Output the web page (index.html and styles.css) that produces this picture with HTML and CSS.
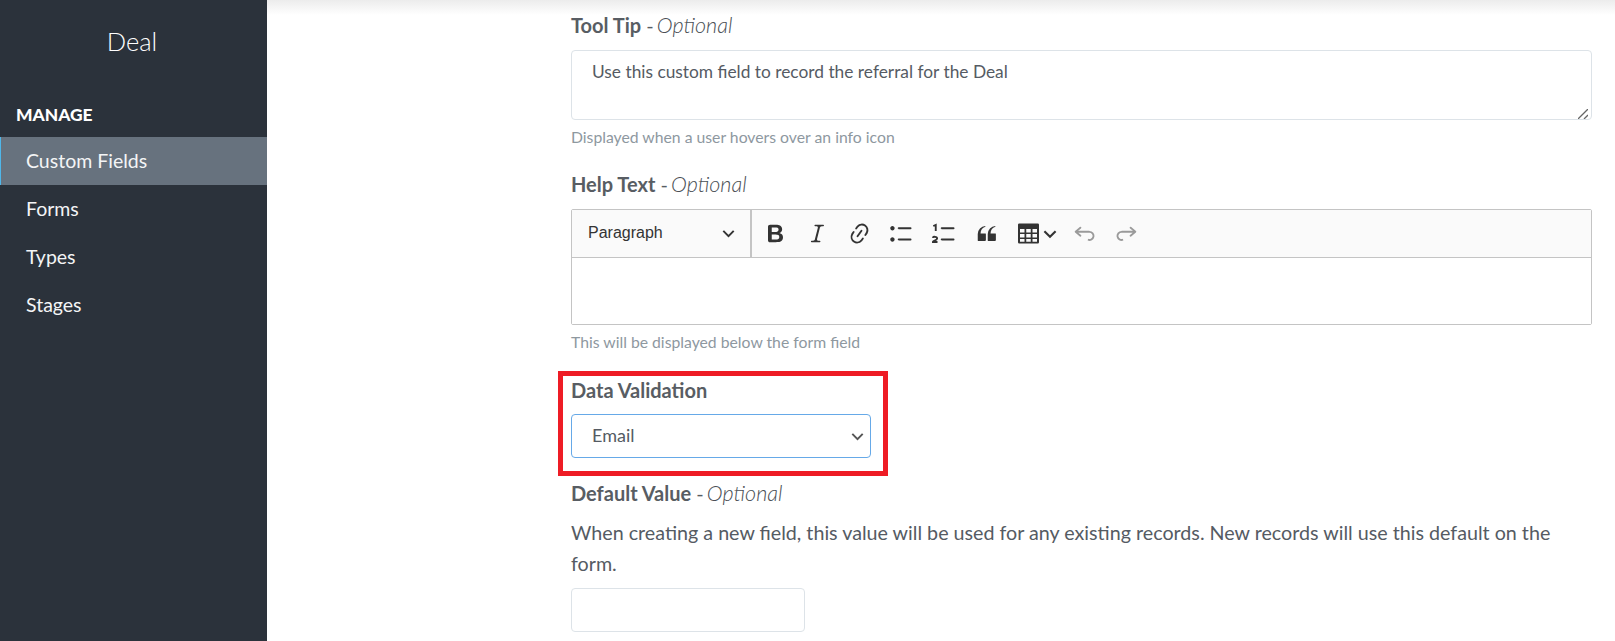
FILE: index.html
```html
<!DOCTYPE html>
<html lang="en">
<head>
<meta charset="utf-8">
<title>Custom Fields</title>
<link rel="stylesheet" href="styles.css">
</head>
<body>
<aside class="sidebar">
  <h1 class="sidebar-title">Deal</h1>
  <h2 class="sidebar-heading">MANAGE</h2>
  <nav class="sidebar-nav">
    <a class="nav-item active">Custom Fields</a>
    <a class="nav-item">Forms</a>
    <a class="nav-item">Types</a>
    <a class="nav-item">Stages</a>
  </nav>
</aside>
<main class="main">
  <div class="top-shadow"></div>
  <form class="form">
    <div class="field field-tooltip">
      <label class="label"><b>Tool Tip</b> - <i>Optional</i></label>
      <div class="textarea-wrap">
        <textarea class="control textarea">Use this custom field to record the referral for the Deal</textarea>
        <svg class="grip" viewBox="0 0 10 10"><path d="M0 10 10 0M6 10l4-4"/></svg>
      </div>
      <p class="hint">Displayed when a user hovers over an info icon</p>
    </div>
    <div class="field field-help">
      <label class="label"><b>Help Text</b> - <i>Optional</i></label>
      <div class="editor">
        <div class="toolbar">
          <div class="format">
            <span>Paragraph</span>
            <svg class="chev" viewBox="0 0 10 10"><path d="M1 3l4 4 4-4" /></svg>
          </div>
          <div class="tools">
            <svg class="icon" viewBox="0 0 20 20"><path d="M10.187 17H5.773c-.637 0-1.092-.138-1.364-.415-.273-.277-.409-.718-.409-1.323V4.738c0-.617.14-1.062.419-1.332.279-.27.73-.406 1.354-.406h4.68c.69 0 1.288.041 1.793.124.506.083.96.242 1.36.478.341.197.644.447.906.75a3.262 3.262 0 0 1 .808 2.162c0 1.401-.722 2.426-2.167 3.075C15.05 10.175 16 11.315 16 13.01a3.756 3.756 0 0 1-2.296 3.504 6.1 6.1 0 0 1-1.517.377c-.571.073-1.238.11-2 .11zm-.217-6.217H7v4.087h3.069c1.977 0 2.965-.69 2.965-2.072 0-.707-.256-1.22-.768-1.537-.512-.319-1.277-.478-2.296-.478zM7 5.13v3.619h2.606c.729 0 1.292-.067 1.69-.2a1.6 1.6 0 0 0 .91-.765c.165-.267.247-.566.247-.897 0-.707-.26-1.176-.778-1.409-.519-.232-1.31-.348-2.375-.348H7z"/></svg>
            <svg class="icon" viewBox="0 0 20 20"><path d="m9.586 14.633.021.004c-.036.335.095.655.393.962.082.083.173.15.274.201h1.474a.6.6 0 1 1 0 1.2H5.304a.6.6 0 0 1 0-1.2h1.15c.474-.07.809-.182 1.005-.334.157-.122.291-.32.404-.597l2.416-9.55a1.053 1.053 0 0 0-.281-.823 1.12 1.12 0 0 0-.442-.296H8.15a.6.6 0 0 1 0-1.2h6.443a.6.6 0 1 1 0 1.2h-1.195c-.376.056-.65.155-.823.296-.215.175-.423.439-.623.79l-2.366 9.347z"/></svg>
            <svg class="icon" viewBox="0 0 20 20"><path d="m11.077 15 .991-1.416a.75.75 0 1 1 1.229.86l-1.148 1.64a.748.748 0 0 1-.217.206 5.251 5.251 0 0 1-8.503-5.955.741.741 0 0 1 .12-.274l1.147-1.639a.75.75 0 1 1 1.228.86L4.933 10.7l.006.003a3.75 3.75 0 0 0 6.132 4.294l.006.004zm5.494-5.335a.748.748 0 0 1-.12.274l-1.147 1.639a.75.75 0 1 1-1.228-.86l.86-1.23a3.75 3.75 0 0 0-6.144-4.301l-.86 1.229a.75.75 0 0 1-1.229-.86l1.148-1.64a.748.748 0 0 1 .217-.206 5.251 5.251 0 0 1 8.503 5.955zm-4.563-2.532a.75.75 0 0 1 .184 1.045l-3.155 4.505a.75.75 0 1 1-1.229-.86l3.155-4.506a.75.75 0 0 1 1.045-.184z"/></svg>
            <svg class="icon" viewBox="0 0 20 20"><path d="M7 5.750c0 .414.336.75.75.75h9.500a.75.75 0 1 0 0-1.500h-9.500a.75.75 0 0 0-.75.75zm-6 0C1 4.784 1.777 4 2.750 4c.966 0 1.750.777 1.750 1.750 0 .966-.777 1.750-1.750 1.750C1.784 7.500 1 6.723 1 5.750zm6 9c0 .414.336.75.75.75h9.500a.75.75 0 1 0 0-1.500h-9.500a.75.75 0 0 0-.75.75zm-6 0c0-.966.777-1.750 1.750-1.750.966 0 1.750.777 1.750 1.750 0 .966-.777 1.750-1.750 1.750-.966 0-1.750-.777-1.750-1.750z"/></svg>
            <svg class="icon" viewBox="0 0 20 20"><path d="M7 5.750c0 .414.336.75.75.75h9.500a.75.75 0 1 0 0-1.500h-9.500a.75.75 0 0 0-.75.75zm0 9c0 .414.336.75.75.75h9.500a.75.75 0 1 0 0-1.500h-9.500a.75.75 0 0 0-.75.75z"/><path class="num" d="M1 4 3 3.200V8M.6 13.500c.3-1.200 3.500-1.200 3.500.5 0 1.300-3 1.800-3.500 2.800h3.800"/></svg>
            <svg class="icon" viewBox="0 0 20 20"><path d="M3 10.423a6.500 6.500 0 0 1 6.056-6.408l.038.67C6.448 5.423 5.354 7.663 5.220 10H9c.552 0 .5.432.5.986v4.511c0 .554-.448.503-1 .503h-5c-.552 0-.5-.449-.5-1.003v-4.574zm8 0a6.500 6.500 0 0 1 6.056-6.408l.038.67c-2.646.739-3.740 2.979-3.873 5.315H17c.552 0 .5.432.5.986v4.511c0 .554-.448.503-1 .503h-5c-.552 0-.5-.449-.5-1.003v-4.574z"/></svg>
            <span class="table-tool">
              <svg class="icon" viewBox="0 0 20 20"><path fill-rule="evenodd" d="M2.600 2h14.800a1 1 0 0 1 1 1v14a1 1 0 0 1-1 1H2.600a1 1 0 0 1-1-1V3a1 1 0 0 1 1-1zm.6 4.400v2.800h3.600V6.400zm5 0v2.800h3.600V6.400zm5 0v2.800h3.600V6.400zM3.200 10.400v2.800h3.600v-2.800zm5 0v2.800h3.600v-2.800zm5 0v2.800h3.600v-2.800zM3.200 14.400v2.200h3.600v-2.200zm5 0v2.200h3.600v-2.200zm5 0v2.200h3.600v-2.200z"/></svg>
              <svg class="chev small" viewBox="0 0 10 10"><path d="M1 3l4 4 4-4" /></svg>
            </span>
            <svg class="icon muted" viewBox="0 0 20 20"><path d="m5.042 9.367 2.189 1.837a.75.75 0 0 1-.965 1.149l-3.788-3.180a.747.747 0 0 1-.21-.284.75.75 0 0 1 .17-.945L6.230 4.762a.75.75 0 1 1 .964 1.150L4.863 7.866h8.917A.75.75 0 0 1 14 7.900a4 4 0 1 1-1.477 7.718l.344-1.489a2.500 2.500 0 1 0 1.094-4.730l.008-.032H5.042z"/></svg>
            <svg class="icon muted" viewBox="0 0 20 20"><path d="m14.958 9.367-2.189 1.837a.75.75 0 0 0 .965 1.149l3.788-3.180a.747.747 0 0 0 .21-.284.75.75 0 0 0-.17-.945L13.770 4.762a.75.75 0 1 0-.964 1.150l2.331 1.955H6.220A.75.75 0 0 0 6 7.900a4 4 0 1 0 1.477 7.718l-.344-1.489A2.500 2.500 0 1 1 6.039 9.400l-.008-.032h8.927z"/></svg>
          </div>
        </div>
        <div class="editor-body"></div>
      </div>
      <p class="hint">This will be displayed below the form field</p>
    </div>
    <div class="field field-validation">
      <label class="label"><b>Data Validation</b></label>
      <div class="select-wrap">
        <select class="control select"><option>Email</option></select>
        <svg class="chev select-chev" viewBox="0 0 10 10"><path d="M1 3l4 4 4-4" /></svg>
      </div>
      <div class="highlight"></div>
    </div>
    <div class="field field-default">
      <label class="label"><b>Default Value</b> - <i>Optional</i></label>
      <p class="desc">When creating a new field, this value will be used for any existing records. New records will use this default on the form.</p>
      <input class="control input" type="text">
    </div>
  </form>
</main>
</body>
</html>
```
FILE: styles.css
```css
* { box-sizing: border-box; }
html, body { margin: 0; height: 641px; overflow: hidden; }
body {
  display: flex;
  font-family: Lato, "Liberation Sans", sans-serif;
  color: #555b63;
  background: #fff;
}
.sidebar {
  width: 267px;
  flex: none;
  background: #2b323b;
  color: #fff;
}
.sidebar-title {
  margin: 0;
  padding-top: 25px;
  height: 96px;
  text-align: center;
  font-size: 25.500px;
  line-height: 32px;
  font-weight: 300;
  padding-right: 3px;
}
.sidebar-heading {
  margin: 0;
  height: 41px;
  padding: 9px 0 0 16px;
  font-size: 17.400px;
  line-height: 20px;
  font-weight: 900;
}
.sidebar-nav { display: flex; flex-direction: column; }
.nav-item {
  height: 48px;
  line-height: 48px;
  padding-left: 26px;
  font-size: 19.500px;
  color: #f4f5f6;
}
.nav-item.active {
  background: #67727e;
  border-left: 1px solid #4fb7ea;
  padding-left: 25px;
}
.main {
  position: relative;
  flex: 1;
  min-width: 0;
  padding-left: 304px;
  padding-right: 23px;
}
.top-shadow {
  position: absolute;
  left: 0;
  right: 0;
  top: 0;
  height: 15px;
  background: linear-gradient(#ececec, #fff);
}
.form { position: relative; }
.field { position: relative; }
.label {
  display: block;
  font-size: 20px;
  line-height: 24px;
  color: #585d63;
}
.label b { font-weight: 700; }
.label i { font-weight: 300; font-style: italic; font-size: 21.500px; color: #4a4f55; margin-left: -2px; }
.control {
  display: block;
  width: 100%;
  border: 1px solid #dde3e8;
  border-radius: 4px;
  background: #fff;
  font: 400 17.330px Lato, "Liberation Sans", sans-serif;
  color: #555b63;
  outline: none;
}
.field-tooltip { padding-top: 13px; }
.textarea-wrap { position: relative; margin-top: 13px; }
.textarea {
  height: 70px;
  padding: 9px 20px;
  line-height: 24px;
  resize: none;
}
.grip {
  position: absolute;
  right: 4px;
  bottom: 1px;
  width: 10px;
  height: 10px;
  fill: none;
  stroke: #666;
  stroke-width: 1.300;
  pointer-events: none;
}
.hint {
  margin: 7px 0 0;
  font-size: 15.750px;
  line-height: 20px;
  color: #8e989f;
}
.field-help { margin-top: 25px; }
.editor {
  margin-top: 13px;
  border: 1px solid #c4c4c4;
  border-radius: 2px;
}
.toolbar {
  display: flex;
  height: 48px;
  background: #fafafa;
  border-bottom: 1px solid #c4c4c4;
}
.format {
  width: 180px;
  display: flex;
  align-items: center;
  justify-content: space-between;
  padding: 0 15px 2px 16px;
  border-right: 2px solid #c4c4c4;
  font: 16px "Liberation Sans", sans-serif;
  color: #333;
}
.format .chev { margin-top: 2px; }
.tools {
  display: flex;
  align-items: center;
  gap: 17.300px;
  padding-left: 10.500px;
}
.icon { width: 25px; height: 25px; display: block; fill: #333; flex: none; }
.icon.muted { fill: #9a9a9a; }
.icon .num { fill: none; stroke: #333; stroke-width: 1.500; }
.chev { width: 13px; height: 13px; fill: none; stroke: #333; stroke-width: 1.500; display: block; }
.chev.small { width: 14px; height: 14px; }
.table-tool { display: flex; align-items: center; gap: 2px; margin-right: -2.800px; }
.editor-body { height: 66px; background: #fff; }
.field-validation { margin-top: 26px; }
.select-wrap { position: relative; width: 300px; margin-top: 12px; }
.select {
  appearance: none;
  height: 44px;
  padding: 0 20px 2px;
  font-size: 18px;
  border-color: #66a9e8;
}
.select-chev {
  position: absolute;
  right: 7px;
  top: 16px;
  stroke: #555;
  stroke-width: 1.500;
  pointer-events: none;
}
.highlight {
  position: absolute;
  left: -13px;
  top: -7px;
  width: 330px;
  height: 105px;
  border: 5px solid #ee1c25;
  pointer-events: none;
}
.field-default { margin-top: 23px; }
.desc {
  margin: 12px 0 0;
  font-size: 19.700px;
  line-height: 31px;
}
.input { width: 234px; height: 44px; margin-top: 9px; }
```
